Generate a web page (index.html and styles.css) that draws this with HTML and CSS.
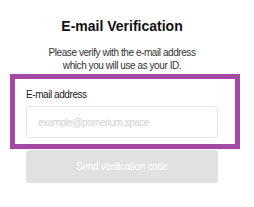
FILE: index.html
```html
<!DOCTYPE html>
<html lang="en">
<head>
    <meta charset="utf-8">
    <title>E-mail Verification</title>
    <link rel="stylesheet" href="styles.css">
</head>
<body>

<div class="verify">
    <h1>E-mail Verification</h1>
    <p class="intro">Please verify with the e-mail address<br>which you will use as your ID.</p>

    <form id="verifyForm">
        <label for="email">E-mail address</label>
        <input type="email" id="email" name="email" placeholder="example@pomerium.space">
        <button type="submit" disabled>Send verification code</button>
    </form>
</div>

<div class="highlight"></div>

</body>
</html>
```

FILE: styles.css
```css
body {
    font-family: "Liberation Sans", Arial, sans-serif;
    margin: 0;
    background-color: #fff;
    color: #222;
    position: relative;
}
.verify {
    width: 192px;
    margin-left: 26px;
    padding-top: 18px;
}
h1 {
    margin: 0;
    font-size: 14px;
    line-height: 17px;
    text-align: center;
    color: #111;
}
.intro {
    margin: 11px 0 0;
    font-size: 10px;
    line-height: 13px;
    letter-spacing: -0.43px;
    text-align: center;
    color: #333;
}
form {
    display: flex;
    flex-direction: column;
    margin-top: 16px;
}
label {
    font-size: 10px;
    line-height: 13px;
    letter-spacing: -0.43px;
    color: #222;
    margin-bottom: 5px;
}
input {
    height: 32px;
    padding: 0 11px;
    border: 1px solid #e6e6e6;
    border-radius: 4px;
    box-sizing: border-box;
    font-family: inherit;
    font-size: 10px;
    letter-spacing: -0.5px;
}
input::placeholder {
    color: #d2d2d2;
}
button {
    height: 33px;
    margin-top: 12px;
    border: none;
    border-radius: 3px;
    background-color: #e1e1e1;
    color: #fff;
    font-family: inherit;
    font-size: 10px;
    letter-spacing: -0.3px;
}
.highlight {
    position: absolute;
    left: 10px;
    top: 74px;
    width: 230px;
    height: 75px;
    border: 5px solid #a349a4;
    box-sizing: border-box;
}
```
